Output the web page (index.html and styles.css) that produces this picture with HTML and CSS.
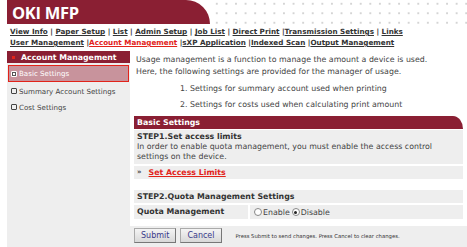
FILE: index.html
```html
<!DOCTYPE html>
<html>
<head>
<meta charset="utf-8">
<link rel="stylesheet" href="styles.css">
</head>
<body>
<div class="page">
  <div class="top">
    <div class="brand">OKI MFP</div>
    <div class="dots"></div>
  </div>
  <div class="nav">
    <div class="nav-line"><a href="#">View Info</a> | <a href="#">Paper Setup</a> | <a href="#">List</a> | <a href="#">Admin Setup</a> | <a href="#">Job List</a> | <a href="#">Direct Print</a> |<a href="#">Transmission Settings</a> | <a href="#">Links</a></div>
    <div class="nav-line"><a href="#">User Management</a> |<a href="#" class="cur">Account Management</a> |<a href="#">sXP Application</a> |<a href="#">Indexed Scan</a> |<a href="#">Output Management</a></div>
  </div>
  <div class="body">
    <div class="side">
      <div class="side-head"><span class="bullet"></span>Account Management</div>
      <div class="side-item active"><span class="box"></span>Basic Settings</div>
      <div class="side-item"><span class="box"></span>Summary Account Settings</div>
      <div class="side-item"><span class="box"></span>Cost Settings</div>
    </div>
    <div class="main">
      <div class="panel">
        <p class="intro">Usage management is a function to manage the amount a device is used.<br>Here, the following settings are provided for the manager of usage.</p>
        <ol class="list">
          <li>Settings for summary account used when printing</li>
          <li>Settings for costs used when calculating print amount</li>
        </ol>
        <div class="sec-head">Basic Settings</div>
        <div class="row step1">
          <div class="step-title">STEP1.Set access limits</div>
          <div>In order to enable quota management, you must enable the access control settings on the device.</div>
        </div>
        <div class="row linkrow"><span class="raquo">»</span><a href="#" class="redlink">Set Access Limits</a></div>
        <div class="row step2">STEP2.Quota Management Settings</div>
        <div class="quota">
          <div class="qlabel">Quota Management</div>
          <div class="qval">
            <label><span class="radio"></span>Enable</label>
            <label><span class="radio on"></span>Disable</label>
          </div>
        </div>
      </div>
      <div class="buttons">
        <button class="btn">Submit</button>
        <button class="btn">Cancel</button>
        <span class="hint">Press Submit to send changes. Press Cancel to clear changes.</span>
      </div>
    </div>
  </div>
</div>
</body>
</html>
```
FILE: styles.css
```css
* { box-sizing: border-box; }
html, body { margin: 0; padding: 0; background: #fff; }
body {
  font-family: "DejaVu Sans", Verdana, sans-serif;
  font-size: 7.85px;
  color: #444;
  width: 467px;
  height: 247px;
  overflow: hidden;
}
.page { padding-left: 7px; }
.top { display: flex; height: 24px; }
.brand {
  width: 203px;
  height: 24px;
  background: #8a1f33;
  border-top-right-radius: 24px 24px;
  color: #fff;
  font-family: "Open Sans", "DejaVu Sans", sans-serif;
  font-weight: 700;
  font-size: 16.5px;
  line-height: 25px;
  padding-left: 5px;
  letter-spacing: -0.3px;
}
.dots {
  flex: 1;
  background-image: radial-gradient(circle, #d4d4d4 0.7px, transparent 1.1px);
  background-size: 9.6px 9.5px;
  background-position: 2px -1px;
}
.nav { padding: 2px 0 0 3px; font-weight: 700; font-size: 7.2px; color: #333; line-height: 11px; }
.nav a { color: #333; text-decoration: underline; }
.nav a.cur { color: #e2231a; }
.body {
  display: grid;
  grid-template-columns: 123px 1fr;
  background: #eee;
  margin-top: 3px;
  height: 200px;
}
.side-head {
  background: #8a1f33;
  color: #fff;
  font-weight: 700;
  height: 12px;
  font-size: 7.8px;
  display: flex;
  align-items: center;
  padding-left: 5px;
}
.bullet { width: 3px; height: 3px; background: #e2231a; margin-right: 6px; }
.side-item {
  display: flex;
  align-items: center;
  height: 16px;
  padding-left: 4px;
  color: #444;
  font-size: 7.1px;
}
.side-item.active + .side-item { margin-top: 1px; }
.side-item.active {
  background: #c8939c;
  color: #fff;
  border: 1px solid #e2231a;
  margin: 2px 1px 0 1px;
  height: 17px;
  padding-left: 2px;
}
.box {
  width: 6px; height: 6px;
  border: 1px solid #444;
  border-radius: 1px;
  margin-right: 2px;
}
.side-item.active .box { border-color: #fff; background: #fff; box-shadow: inset 0 0 0 1px #555; }
.main { display: flex; flex-direction: column; }
.panel { background: #fff; padding: 3px 4px 7px 4px; }
.intro { margin: 0 0 0 2px; line-height: 12px; }
.list { margin: 3px 0 0 0; padding-left: 56px; line-height: 16px; }
.sec-head {
  margin-top: 3px;
  background: #8a1f33;
  color: #fff;
  font-weight: 700;
  height: 13px;
  line-height: 13px;
  padding-left: 3px;
  border-top-right-radius: 10px 13px;
}
.row { background: #eee; padding: 0 3px; }
.step1 { margin-top: 1px; padding-top: 2px; padding-bottom: 2px; line-height: 10px; }
.step-title { font-weight: 700; color: #333; }
.linkrow { margin-top: 2px; height: 13px; line-height: 13px; display: flex; align-items: center; }
.raquo { font-weight: 700; margin-right: 7px; font-size: 7px; }
.redlink { color: #e2231a; font-weight: 700; }
.step2 { margin-top: 11px; height: 13px; line-height: 13px; font-weight: 700; color: #333; }
.quota { display: flex; margin-top: 2px; gap: 2px; }
.qlabel { width: 114px; background: #eee; font-weight: 700; color: #333; height: 14px; line-height: 14px; padding-left: 3px; }
.qval { flex: 1; background: #eee; height: 14px; display: flex; align-items: center; padding-left: 4px; gap: 2px; }
.qval label { display: flex; align-items: center; }
.radio { width: 8px; height: 8px; border: 1px solid #888; border-radius: 50%; margin-right: 1px; background: #fff; position: relative; }
.radio.on::after { content: ""; position: absolute; left: 1.5px; top: 1.5px; width: 3px; height: 3px; border-radius: 50%; background: #222; }
.buttons { display: flex; align-items: center; padding: 2px 0 0 4px; }
.btn {
  font-family: "DejaVu Sans", sans-serif;
  font-size: 8px;
  color: #3a3a8a;
  background: linear-gradient(#f4f4f4, #d8d8d8);
  border: 1px solid #aaa;
  border-right-color: #777;
  border-bottom-color: #777;
  height: 15px;
  padding: 0 6px;
  margin-right: 4px;
}
.hint { font-size: 5.3px; margin-left: 10px; color: #333; }
```
